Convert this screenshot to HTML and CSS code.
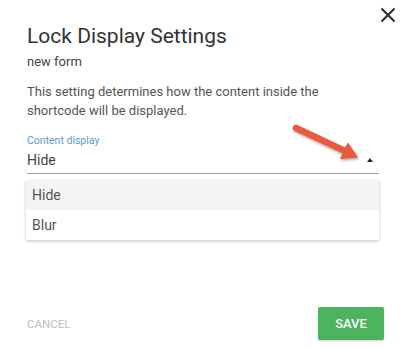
FILE: index.html
```html
<!DOCTYPE html>
<html>
<head>
<meta charset="utf-8">
<link rel="stylesheet" href="styles.css">
</head>
<body>
<div class="dialog">
  <button class="close" aria-label="Close">
    <svg width="16" height="16" viewBox="0 0 16 16"><path d="M1.5 1.5 L14.5 14.5 M14.5 1.5 L1.5 14.5" stroke="#333" stroke-width="2.2" fill="none"/></svg>
  </button>
  <h1 class="title">Lock Display Settings</h1>
  <div class="subtitle">new form</div>
  <p class="desc">This setting determines how the content inside the shortcode will be displayed.</p>
  <div class="field">
    <label class="label">Content display</label>
    <div class="select">
      <span class="value">Hide</span>
      <span class="caret"></span>
    </div>
    <ul class="menu">
      <li class="item active">Hide</li>
      <li class="item">Blur</li>
    </ul>
  </div>
  <div class="actions">
    <button class="cancel">CANCEL</button>
    <button class="save">SAVE</button>
  </div>
  <svg class="arrow" width="80" height="50" viewBox="0 0 80 50">
    <defs>
      <filter id="sh" x="-20%" y="-20%" width="140%" height="140%">
        <feDropShadow dx="0.5" dy="1.5" stdDeviation="1.2" flood-color="#000" flood-opacity="0.35"/>
      </filter>
    </defs>
    <g filter="url(#sh)">
      <line x1="8" y1="8" x2="57" y2="31" stroke="#ea5a3f" stroke-width="6.5" stroke-linecap="round"/>
      <polygon points="69,37 53,38.2 59.8,23.8" fill="#ea5a3f" stroke="#ea5a3f" stroke-width="1.5" stroke-linejoin="round"/>
    </g>
  </svg>
</div>
</body>
</html>
```

FILE: styles.css
```css
* { box-sizing: border-box; }
html, body { margin: 0; padding: 0; background: #fff; }
body { font-family: Roboto, "Liberation Sans", Arial, sans-serif; width: 400px; height: 347px; overflow: hidden; }

.dialog {
  position: relative;
  width: 400px;
  height: 347px;
  padding: 24px 21px 0 27px;
  display: flex;
  flex-direction: column;
}

.close {
  position: absolute;
  top: 7px;
  right: 4px;
  width: 16px;
  height: 16px;
  padding: 0;
  border: 0;
  background: none;
  display: flex;
}

.title {
  margin: 0;
  font-size: 21px;
  line-height: 24px;
  font-weight: 400;
  color: #333;
}

.subtitle {
  margin-top: 6px;
  font-size: 13px;
  line-height: 16px;
  color: #444;
}

.desc {
  margin: 12px 0 0;
  font-size: 13px;
  line-height: 19px;
  color: #555;
  width: 305px;
}

.field {
  margin-top: 15px;
  width: 352px;
  display: flex;
  flex-direction: column;
}

.label {
  font-size: 10.5px;
  line-height: 12px;
  color: #5a9bd4;
}

.select {
  display: flex;
  align-items: center;
  justify-content: space-between;
  height: 27px;
  border-bottom: 1px solid #9e9e9e;
}

.value {
  font-size: 14px;
  color: #444;
}

.caret {
  width: 0;
  height: 0;
  border-left: 3px solid transparent;
  border-right: 3px solid transparent;
  border-bottom: 4px solid #222;
  margin-right: 6px;
}

.menu {
  list-style: none;
  margin: 6px 0 0 -1px;
  padding: 0;
  width: 353px;
  background: #fff;
  box-shadow: 0 1px 3px rgba(0,0,0,0.25);
}

.item {
  height: 30px;
  display: flex;
  align-items: center;
  padding-left: 6px;
  font-size: 14px;
  color: #555;
}

.item.active { background: #f4f4f4; }

.actions {
  margin-top: auto;
  margin-bottom: 7px;
  display: flex;
  justify-content: space-between;
  align-items: center;
  margin-right: -5px;
}

.cancel {
  border: 0;
  background: none;
  padding: 0;
  font-family: inherit;
  font-size: 11.5px;
  color: #bdbdbd;
}

.save {
  width: 66px;
  height: 33px;
  border: 0;
  border-radius: 2px;
  background: #4db35e;
  color: #fff;
  font-family: inherit;
  font-size: 13px;
  font-weight: 500;
  box-shadow: 0 1px 2px rgba(0,0,0,0.2);
}

.arrow {
  position: absolute;
  left: 288px;
  top: 120px;
}
```
